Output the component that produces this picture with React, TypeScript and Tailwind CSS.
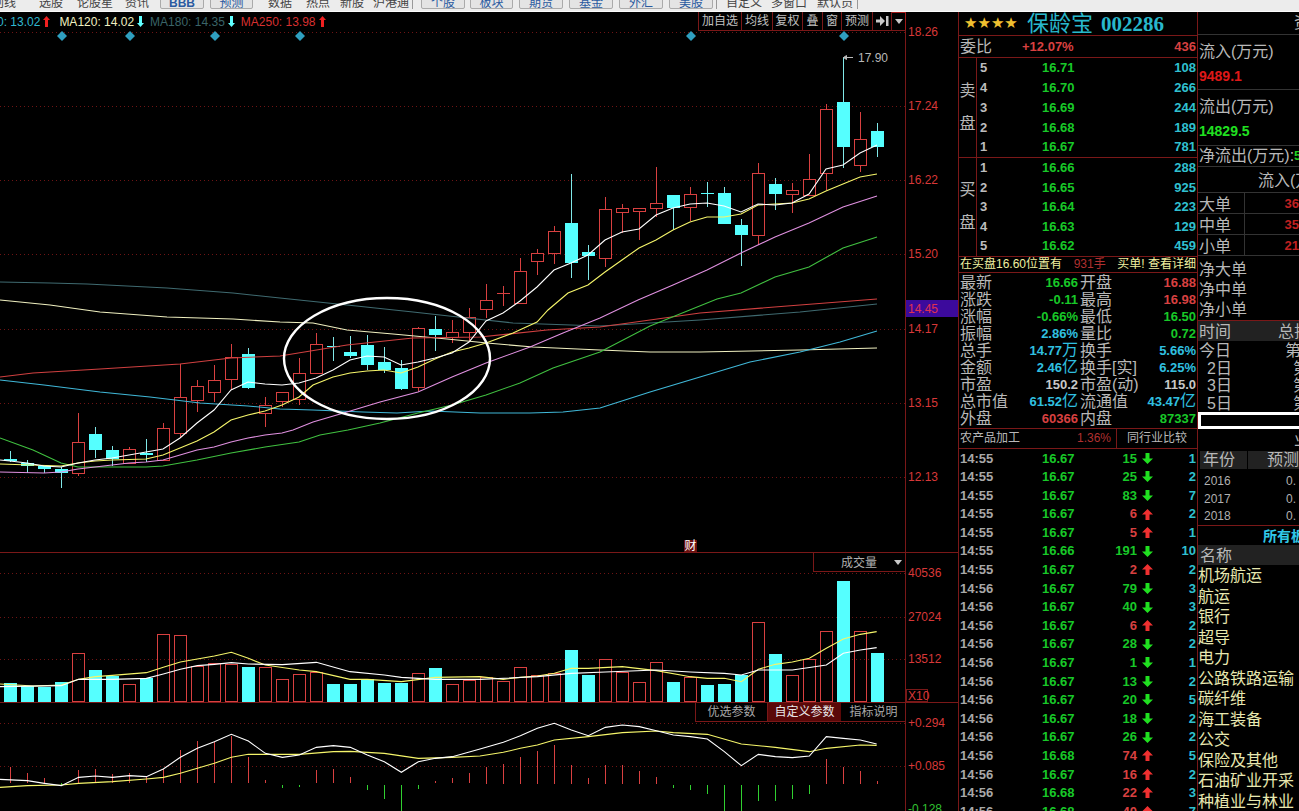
import React from "react";

type Candle = [number, number, number, number, "r" | "c"];

const X = (i: number) => 10 + 17 * i;

const candles: Candle[] = [
  [459, 461, 451, 462, "c"], [463, 466, 460, 473, "c"], [466, 469, 466, 473, "c"], [469, 473, 467, 488, "c"],
  [442, 473, 413, 476, "r"], [434, 450, 427, 458, "c"], [450, 459, 446, 466, "c"], [449, 463, 447, 463, "r"],
  [453, 455, 439, 462, "c"], [428, 460, 423, 460, "r"], [397, 433, 364, 438, "r"], [386, 400, 380, 412, "r"],
  [380, 392, 365, 402, "r"], [357, 379, 344, 390, "r"], [354, 388, 348, 389, "c"], [405, 413, 397, 427, "r"],
  [392, 401, 392, 407, "r"], [373, 399, 358, 405, "r"], [344, 373, 333, 373, "r"], [346, 346, 337, 361, "c"],
  [352, 356, 336, 358, "c"], [345, 365, 335, 370, "c"], [362, 370, 347, 373, "c"], [368, 389, 360, 390, "c"],
  [328, 387, 327, 391, "r"], [329, 335, 316, 351, "c"], [332, 337, 320, 343, "r"], [317, 332, 308, 342, "r"],
  [300, 309, 284, 318, "r"], [293, 293, 286, 306, "r"], [271, 303, 258, 303, "r"], [253, 261, 249, 275, "r"],
  [231, 253, 226, 264, "r"], [223, 263, 174, 278, "c"], [252, 256, 245, 280, "c"], [209, 258, 197, 267, "r"],
  [208, 212, 204, 233, "r"], [208, 211, 208, 240, "r"], [203, 208, 167, 217, "r"], [195, 208, 195, 230, "c"],
  [194, 207, 187, 221, "r"], [193, 193, 182, 207, "c"], [193, 224, 187, 224, "c"], [225, 235, 219, 266, "c"],
  [173, 235, 163, 245, "r"], [184, 194, 178, 210, "c"], [190, 194, 183, 213, "r"], [179, 195, 154, 195, "r"],
  [109, 173, 104, 190, "r"], [102, 147, 57, 168, "c"], [139, 165, 112, 172, "r"], [131, 147, 123, 157, "c"],
];

const maLines: { color: string; pts: number[][] }[] = [
  { color: "#3f6a70", pts: [[0, 282], [50, 283], [87, 284], [167, 288], [233, 293], [280, 298], [347, 305], [413, 312], [467, 318], [513, 323], [600, 326], [700, 320], [800, 312], [877, 304]] },
  { color: "#f0f0c0", pts: [[0, 300], [50, 305], [100, 312], [167, 317], [233, 319], [280, 322], [313, 323], [347, 330], [393, 334], [447, 339], [487, 343], [533, 347], [600, 350], [650, 352], [700, 352], [800, 350], [877, 348]] },
  { color: "#d04040", pts: [[0, 377], [33, 373], [100, 369], [180, 364], [231, 358], [280, 356], [347, 345], [413, 338], [480, 337], [547, 330], [600, 327], [700, 313], [800, 305], [877, 299]] },
  { color: "#40b8d8", pts: [[0, 380], [44, 385], [100, 392], [150, 397], [200, 403], [248, 406], [280, 409], [313, 410], [363, 412], [397, 413], [430, 411], [480, 413], [530, 413], [563, 412], [600, 408], [650, 392], [700, 377], [750, 362], [800, 352], [840, 342], [877, 331]] },
  { color: "#40c040", pts: [[0, 438], [33, 450], [61, 463], [78, 467], [112, 467], [146, 467], [163, 466], [197, 460], [231, 453], [265, 447], [299, 442], [320, 435], [348, 430], [380, 423], [418, 413], [452, 405], [486, 395], [520, 383], [553, 368], [600, 352], [650, 326], [717, 299], [741, 293], [775, 277], [809, 267], [843, 248], [877, 237]] },
  { color: "#e090e0", pts: [[0, 472], [44, 473], [61, 472], [78, 469], [95, 467], [112, 465], [129, 463], [146, 462], [163, 460], [180, 455], [197, 450], [214, 447], [231, 442], [248, 438], [265, 435], [282, 433], [293, 430], [313, 422], [347, 412], [380, 402], [418, 392], [452, 377], [486, 363], [530, 347], [563, 333], [600, 318], [638, 300], [673, 285], [707, 270], [741, 253], [775, 237], [809, 223], [843, 207], [877, 196]] },
  { color: "#f5f56a", pts: [[0, 464], [61, 466], [78, 463], [95, 461], [112, 460], [146, 459], [163, 455], [180, 448], [197, 441], [214, 432], [231, 420], [248, 415], [265, 411], [282, 405], [299, 397], [313, 385], [333, 377], [350, 373], [367, 371], [384, 370], [401, 373], [418, 367], [435, 359], [452, 352], [469, 348], [486, 343], [513, 333], [537, 322], [548, 310], [568, 293], [588, 285], [605, 272], [622, 260], [639, 248], [656, 240], [673, 230], [690, 222], [707, 217], [724, 217], [741, 214], [758, 205], [775, 204], [792, 203], [809, 199], [826, 191], [843, 184], [860, 177], [877, 174]] },
  { color: "#ffffff", pts: [[0, 460], [10, 461], [27, 463], [44, 466], [61, 467], [78, 463], [95, 460], [112, 458], [129, 455], [146, 452], [163, 449], [180, 438], [197, 423], [214, 410], [231, 390], [248, 382], [265, 384], [282, 385], [299, 383], [316, 378], [333, 370], [350, 360], [367, 356], [384, 357], [401, 365], [418, 362], [435, 358], [452, 353], [469, 342], [486, 321], [503, 313], [520, 301], [537, 287], [554, 270], [571, 263], [588, 255], [605, 240], [622, 232], [639, 229], [656, 215], [673, 208], [690, 204], [707, 203], [724, 206], [741, 212], [758, 204], [775, 205], [792, 203], [809, 194], [826, 169], [843, 165], [860, 153], [877, 145]] },
];

const volTops = [
  683, 686, 687, 682, 653, 670, 676, 684, 678, 634, 635, 666, 663, 664, 667, 667, 679, 674, 672, 684, 684, 679, 683, 683, 673, 668,
  684, 680, 677, 681, 667, 675, 673, 650, 675, 659, 672, 682, 662, 682, 677, 685, 684, 675, 622, 654, 675, 659, 631, 581, 631, 653,
];

const macdLeft = [592, 610, 625, 640, 600, 597, 613, 610, 620, 597, 541, 514, 517, 497, 560, 630, 653, 650, 600, 598, 622, 660, 687, 723, 656, 632, 625, 610];
const macdRight = [680, 672, 650, 633, 616, 675, 714, 675, 676, 693, 712, 745, 750, 762, 812, 812, 782, 782, 777, 762, 657, 680, 692, 724];

// traced from the crops, 3x coords with an offset
const fromCrop = (ox: number, oy: number, pts: number[][]) => pts.map(([x, y]) => [ox + x / 3, oy + y / 3]);

const volYellow = [
  ...fromCrop(0, 570, [[0, 342], [100, 348], [184, 345], [236, 328], [286, 320], [337, 316], [439, 308], [490, 292], [541, 276], [643, 258], [694, 247], [745, 265], [796, 285], [898, 300], [949, 305], [1050, 328], [1102, 328], [1204, 335], [1306, 322], [1440, 320]]),
  ...fromCrop(480, 540, [[70, 418], [121, 412], [172, 408], [223, 400], [274, 385], [325, 385], [427, 380], [529, 392], [631, 410], [682, 415], [733, 415], [784, 425], [835, 388], [886, 373], [937, 366], [988, 355], [1039, 325], [1090, 297], [1141, 283], [1190, 275]]),
];
const volWhite = [
  ...fromCrop(0, 570, [[0, 350], [184, 347], [236, 328], [337, 328], [439, 325], [490, 312], [541, 298], [592, 287], [643, 283], [694, 278], [745, 282], [847, 284], [949, 277], [1050, 305], [1153, 315], [1204, 322], [1306, 328], [1440, 328]]),
  ...fromCrop(480, 540, [[172, 410], [274, 400], [376, 396], [529, 390], [631, 396], [733, 400], [784, 405], [835, 390], [937, 390], [1039, 375], [1090, 340], [1141, 330], [1190, 323]]),
];
const macdWhite = [
  ...fromCrop(0, 570, [[0, 628], [82, 632], [133, 640], [184, 647], [236, 622], [286, 618], [337, 622], [388, 617], [439, 620], [490, 597], [541, 562], [592, 535], [643, 515], [694, 493], [745, 513], [796, 550], [847, 562], [898, 555], [949, 532], [1000, 527], [1051, 532], [1102, 555], [1153, 575], [1204, 607], [1255, 575], [1306, 565], [1357, 560], [1440, 537]]),
  ...fromCrop(480, 540, [[70, 607], [121, 587], [172, 565], [223, 550], [274, 570], [325, 587], [376, 562], [427, 555], [478, 560], [529, 572], [580, 585], [631, 590], [682, 597], [733, 635], [784, 677], [835, 643], [886, 650], [937, 653], [988, 648], [1039, 590], [1090, 595], [1141, 600], [1190, 612]]),
];
const macdYellow = [
  ...fromCrop(0, 570, [[0, 652], [82, 647], [184, 645], [236, 640], [337, 635], [439, 627], [490, 622], [541, 610], [592, 595], [643, 580], [694, 562], [745, 553], [898, 553], [1000, 545], [1051, 544], [1153, 550], [1255, 565], [1357, 562], [1440, 558]]),
  ...fromCrop(480, 540, [[70, 637], [121, 625], [172, 615], [223, 600], [325, 590], [427, 578], [529, 573], [580, 578], [682, 583], [784, 612], [886, 622], [988, 635], [1039, 625], [1141, 615], [1190, 616]]),
];

const asPoints = (pts: number[][]) => pts.map((p) => p.join(",")).join(" ");

const RED = "#d84040";
const CYAN = "#55ffff";
const GRID = "#6e1414";
const LINE = "#7a1818";
const LABEL = "#d83838";

function GridLine({ y }: { y: number }) {
  return <line x1={0} x2={905} y1={y + 0.5} y2={y + 0.5} stroke={GRID} strokeDasharray="1 3" />;
}

function AxisText({ y, children, color = LABEL }: { y: number; children: React.ReactNode; color?: string }) {
  return (
    <text x={908} y={y + 4} fill={color} fontSize={12}>
      {children}
    </text>
  );
}

function Diamond({ x }: { x: number }) {
  return <path d={`M${x} 31 L${x + 5} 36 L${x} 41 L${x - 5} 36 Z`} fill="#2f9fc0" />;
}

function PriceChart() {
  return (
    <svg viewBox="0 12 958 541" className="block h-[541px] w-[958px]">
      {[32, 106, 180, 254, 329, 403, 477].map((y) => (
        <GridLine key={y} y={y} />
      ))}
      <line x1={905.5} x2={905.5} y1={12} y2={553} stroke={LINE} />
      {[62, 130, 215, 300, 691, 844].map((x) => (
        <Diamond key={x} x={x} />
      ))}
      <AxisText y={32}>18.26</AxisText>
      <AxisText y={106}>17.24</AxisText>
      <AxisText y={180}>16.22</AxisText>
      <AxisText y={254}>15.20</AxisText>
      <AxisText y={329}>14.17</AxisText>
      <AxisText y={403}>13.15</AxisText>
      <AxisText y={477}>12.13</AxisText>
      <rect x={906} y={300} width={52} height={17} fill="#3c0a9c" />
      <text x={908} y={313} fill="#e03050" fontSize={12}>
        14.45
      </text>

      {candles.map(([top, bottom, high, low, kind], i) => {
        const x = X(i);
        const color = kind === "r" ? RED : CYAN;
        const cross = bottom - top < 1;
        return (
          <g key={i} shapeRendering="crispEdges">
            <line x1={x + 0.5} x2={x + 0.5} y1={high} y2={low} stroke={kind === "r" ? RED : "#80e8e8"} />
            {cross ? (
              <line x1={x - 6} x2={x + 7} y1={top + 0.5} y2={top + 0.5} stroke={color} />
            ) : kind === "r" ? (
              <rect x={x - 5.5} y={top + 0.5} width={12} height={bottom - top} fill="#000" stroke={RED} strokeWidth={1.4} />
            ) : (
              <rect x={x - 6} y={top} width={13} height={bottom - top} fill={CYAN} />
            )}
          </g>
        );
      })}

      {maLines.map((l) => (
        <polyline key={l.color} points={asPoints(l.pts)} fill="none" stroke={l.color} strokeWidth={1.1} />
      ))}

      <ellipse cx={387} cy={358.5} rx={103} ry={60.5} fill="none" stroke="#fff" strokeWidth={2.4} />

      <path d="M843.5 57.5 H853 M843.5 57.5 l3 -2 v4 z" stroke="#bbb" fill="#bbb" />
      <text x={858} y={62} fill="#b8b8b8" fontSize={12}>
        17.90
      </text>
    </svg>
  );
}

function VolumeChart() {
  return (
    <svg viewBox="0 553 958 150" className="block h-[150px] w-[958px]">
      {[573, 617, 659].map((y) => (
        <GridLine key={y} y={y} />
      ))}
      <line x1={0} x2={958} y1={702.5} y2={702.5} stroke={LINE} />
      <line x1={905.5} x2={905.5} y1={553} y2={703} stroke={LINE} />
      <AxisText y={573}>40536</AxisText>
      <AxisText y={617}>27024</AxisText>
      <AxisText y={659}>13512</AxisText>
      <rect x={906.5} y={689.5} width={21} height={12} fill="none" stroke="#7a1818" />
      <text x={908} y={700} fill={LABEL} fontSize={12}>
        X10
      </text>
      {volTops.map((top, i) => {
        const x = X(i);
        return candles[i][4] === "r" ? (
          <rect key={i} x={x - 5.5} y={top + 0.5} width={12} height={701 - top} fill="none" stroke={RED} strokeWidth={1.4} shapeRendering="crispEdges" />
        ) : (
          <rect key={i} x={x - 6} y={top} width={13} height={702 - top} fill={CYAN} shapeRendering="crispEdges" />
        );
      })}
      <polyline points={asPoints(volYellow)} fill="none" stroke="#f5f56a" strokeWidth={1.1} />
      <polyline points={asPoints(volWhite)} fill="none" stroke="#fff" strokeWidth={1.1} />
    </svg>
  );
}

function MacdChart() {
  const bars = [
    ...macdLeft.map((z, i) => ({ i, red: z < 640, y1: 570 + (z < 640 ? z : 645) / 3, y2: 570 + (z < 640 ? 640 : z) / 3 })),
    ...macdRight.map((z, i) => ({ i: i + 28, red: z < 732, y1: 540 + (z < 732 ? z : 735) / 3, y2: 540 + (z < 732 ? 732 : z) / 3 })),
  ];
  return (
    <svg viewBox="0 703 958 108" className="block h-[108px] w-[958px]">
      <GridLine y={723} />
      <GridLine y={766} />
      <line x1={905.5} x2={905.5} y1={703} y2={811} stroke={LINE} />
      <AxisText y={723}>+0.294</AxisText>
      <AxisText y={766}>+0.085</AxisText>
      <AxisText y={809} color="#30c030">
        -0.128
      </AxisText>
      {bars.map((b) => (
        <line
          key={b.i}
          x1={X(b.i) + 0.5}
          x2={X(b.i) + 0.5}
          y1={b.y1}
          y2={b.y2}
          stroke={b.red ? RED : "#30d030"}
          shapeRendering="crispEdges"
        />
      ))}
      <polyline points={asPoints(macdYellow)} fill="none" stroke="#f5f56a" strokeWidth={1.1} />
      <polyline points={asPoints(macdWhite)} fill="none" stroke="#fff" strokeWidth={1.1} />
    </svg>
  );
}

function MaArrow({ up, gap }: { up: boolean; gap: string }) {
  return (
    <svg width="7" height="11" viewBox="0 0 7 11" className={`ml-[3px] ${gap}`}>
      {up ? (
        <path d="M3.5 0 L7 4 H5 V11 H2 V4 H0 Z" fill="#f02020" />
      ) : (
        <path d="M3.5 11 L7 7 H5 V0 H2 V7 H0 Z" fill="#60ffff" />
      )}
    </svg>
  );
}

function Legend() {
  return (
    <div className="absolute left-[-3px] top-0 flex h-[19px] items-center whitespace-nowrap text-[12px]">
      <span className="text-[#30b8d0]">0: 13.02</span>
      <MaArrow up gap="mr-[9px]" />
      <span className="text-[#f0f0c0]">MA120: 14.02</span>
      <MaArrow up={false} gap="mr-[6px]" />
      <span className="text-[#3a6468]">MA180: 14.35</span>
      <MaArrow up={false} gap="mr-[6px]" />
      <span className="text-[#d83030]">MA250: 13.98</span>
      <MaArrow up gap="mr-[6px]" />
    </div>
  );
}

function ChartTools() {
  const tools = [
    { t: "加自选", w: "w-[43px]" },
    { t: "均线", w: "w-[31px]" },
    { t: "复权", w: "w-[30px]" },
    { t: "叠", w: "w-[20px]" },
    { t: "窗", w: "w-[19px]" },
    { t: "预测", w: "w-[31px]" },
  ];
  return (
    <div className="absolute left-[698px] top-0 flex h-[19px] w-[208px] border-b border-l border-[#7a1818] text-[12px] text-[#c0c0c0]">
      {tools.map((b) => (
        <div key={b.t} className={`flex items-center justify-center border-r border-[#7a1818] ${b.w}`}>
          {b.t}
        </div>
      ))}
      <div className="flex w-[19px] items-center justify-center border-r border-[#7a1818]">
        <svg width="13" height="10" viewBox="0 0 13 10">
          <path d="M0 3.5 H4 V0 L9 5 L4 10 V6.5 H0 Z M10 0 H12.5 V10 H10 Z" fill="#c8c8c8" />
        </svg>
      </div>
      <div className="flex flex-1 items-center justify-center border-t border-r border-[#a01818]">
        <svg width="8" height="5" viewBox="0 0 8 5">
          <path d="M0 0 H8 L4 5 Z" fill="#c8c8c8" />
        </svg>
      </div>
    </div>
  );
}

function ChartColumn() {
  return (
    <div className="flex w-[958px] flex-col">
      <div className="relative h-[541px] border-b border-[#7a1818]">
        <PriceChart />
        <Legend />
        <ChartTools />
        <div className="absolute left-[684px] top-[528px] flex h-[12px] w-[13px] items-center justify-center bg-[#6a1010] text-[12px] leading-[12px] text-white">
          财
        </div>
      </div>
      <div className="relative h-[150px]">
        <VolumeChart />
        <div className="absolute left-[813px] top-0 flex h-[19px] w-[93px] items-center justify-between border-b border-l border-[#7a1818] pl-[27px] pr-[4px] pt-[1px] text-[12px] text-[#b0b0b0]">
          成交量
          <svg width="8" height="5" viewBox="0 0 8 5">
            <path d="M0 0 H8 L4 5 Z" fill="#c8c8c8" />
          </svg>
        </div>
      </div>
      <div className="relative h-[108px] overflow-hidden">
        <MacdChart />
        <div className="absolute left-[695px] top-0 flex h-[19px] w-[211px] border-b border-l border-[#7a1818] text-[12px] text-[#a8a8a8]">
          <div className="flex w-[72px] items-center justify-center border-r border-[#7a1818]">优选参数</div>
          <div className="flex w-[73px] items-center justify-center bg-[#5a0808] text-[#e8e8e8]">自定义参数</div>
          <div className="flex flex-1 items-center justify-center">指标说明</div>
        </div>
      </div>
    </div>
  );
}

const bookSell = [
  ["5", "16.71", "108"],
  ["4", "16.70", "266"],
  ["3", "16.69", "244"],
  ["2", "16.68", "189"],
  ["1", "16.67", "781"],
];
const bookBuy = [
  ["1", "16.66", "288"],
  ["2", "16.65", "925"],
  ["3", "16.64", "223"],
  ["4", "16.63", "129"],
  ["5", "16.62", "459"],
];

function BookBlock({ label, rows, rowH }: { label: string[]; rows: string[][]; rowH: string }) {
  return (
    <div className="flex border-b border-[#7a1818]">
      <div className="flex w-[18px] flex-col items-center justify-center gap-[17px] border-r border-[#7a1818] text-[16px] leading-[16px] text-[#b8b8b8]">
        <span>{label[0]}</span>
        <span>{label[1]}</span>
      </div>
      <div className="flex-1">
        {rows.map(([n, price, qty]) => (
          <div key={n} className={`flex items-center font-bold text-[13px] ${rowH}`}>
            <span className="w-[65px] pl-[3px] text-[#bdbdbd]">{n}</span>
            <span className="w-[50px] text-[#18c828]">{price}</span>
            <span className="flex-1 pr-[1px] text-right text-[#30c0d0]">{qty}</span>
          </div>
        ))}
      </div>
    </div>
  );
}

const G = "text-[#18c828]";
const R = "text-[#d84040]";
const C = "text-[#30c0e0]";
const W = "text-[#c8c8c8]";

const stats: [string, string, string, string, string, string, string, string][] = [
  ["最新", "16.66", "", G, "开盘", "16.88", "", R],
  ["涨跌", "-0.11", "", G, "最高", "16.98", "", R],
  ["涨幅", "-0.66%", "", G, "最低", "16.50", "", G],
  ["振幅", "2.86%", "", C, "量比", "0.72", "", G],
  ["总手", "14.77", "万", C, "换手", "5.66%", "", C],
  ["金额", "2.46", "亿", C, "换手[实]", "6.25%", "", C],
  ["市盈", "150.2", "", W, "市盈(动)", "115.0", "", W],
  ["总市值", "61.52", "亿", C, "流通值", "43.47", "亿", C],
  ["外盘", "60366", "", R, "内盘", "87337", "", G],
];

function Stats() {
  return (
    <div className="border-b border-[#7a1818] pb-[1px] pt-[1px] text-[16px] text-[#b8b8b8]">
      {stats.map(([l1, v1, u1, c1, l2, v2, u2, c2]) => (
        <div key={l1} className="flex h-[17px] items-center leading-[17px]">
          <div className="flex w-[119px] items-center justify-between pl-[1px]">
            <span>{l1}</span>
            <span className={`font-bold text-[13px] ${c1}`}>
              {v1}
              {u1 && <span className="font-normal text-[16px]">{u1}</span>}
            </span>
          </div>
          <div className="flex flex-1 items-center justify-between pl-[2px] pr-[1px]">
            <span className="whitespace-nowrap">{l2}</span>
            <span className={`font-bold text-[13px] ${c2}`}>
              {v2}
              {u2 && <span className="font-normal text-[16px]">{u2}</span>}
            </span>
          </div>
        </div>
      ))}
    </div>
  );
}

const ticks: [string, string, string, boolean, string][] = [
  ["14:55", "16.67", "15", false, "1"],
  ["14:55", "16.67", "25", false, "2"],
  ["14:55", "16.67", "83", false, "7"],
  ["14:55", "16.67", "6", true, "2"],
  ["14:55", "16.67", "5", true, "1"],
  ["14:55", "16.66", "191", false, "10"],
  ["14:55", "16.67", "2", true, "2"],
  ["14:56", "16.67", "79", false, "3"],
  ["14:56", "16.67", "40", false, "3"],
  ["14:56", "16.67", "6", true, "2"],
  ["14:56", "16.67", "28", false, "2"],
  ["14:56", "16.67", "1", false, "1"],
  ["14:56", "16.67", "13", false, "2"],
  ["14:56", "16.67", "20", false, "5"],
  ["14:56", "16.67", "18", false, "2"],
  ["14:56", "16.67", "26", false, "2"],
  ["14:56", "16.68", "74", true, "5"],
  ["14:56", "16.67", "16", true, "2"],
  ["14:56", "16.68", "22", true, "3"],
  ["14:56", "16.68", "40", true, "7"],
];

function TickArrow({ up }: { up: boolean }) {
  return (
    <svg width="11" height="11" viewBox="0 0 11 11">
      {up ? (
        <path d="M5.5 0 L11 5.5 H7.5 V11 H3.5 V5.5 H0 Z" fill="#f03030" />
      ) : (
        <path d="M5.5 11 L11 5.5 H7.5 V0 H3.5 V5.5 H0 Z" fill="#20e020" />
      )}
    </svg>
  );
}

function TickList() {
  return (
    <div className="min-h-0 flex-1 overflow-hidden">
      {ticks.map(([time, price, qty, up, count], i) => (
        <div key={i} className="flex h-[18.6px] items-center font-bold text-[13px]">
          <span className="w-[83px] pl-[1px] text-[#a8a8a8]">{time}</span>
          <span className="w-[36px] text-[#18c828]">{price}</span>
          <span className={`w-[59px] text-right ${up ? R : G}`}>{qty}</span>
          <span className="flex w-[19px] justify-center pl-[1px]">
            <TickArrow up={up} />
          </span>
          <span className="flex-1 pr-[1px] text-right text-[#30c0d0]">{count}</span>
        </div>
      ))}
    </div>
  );
}

function QuotePanel() {
  return (
    <div className="flex w-[240px] flex-col border-x border-[#7a1818]">
      <div className="flex h-[24px] items-center border-b border-[#7a1818] pl-[5px]">
        <span className="w-[63px] font-['DejaVu_Sans'] text-[15px] leading-[15px] text-[#f0c030]">★★★★</span>
        <span className="text-[22px] leading-[22px] text-[#28b8cc]">保龄宝</span>
        <span className="ml-[8px] font-['Liberation_Serif'] text-[21px] font-bold leading-[22px] text-[#28b8cc]">002286</span>
      </div>
      <div className="flex h-[22px] items-center border-b border-[#7a1818] font-bold text-[13px]">
        <span className="w-[63px] pl-[1px] text-[16px] font-normal text-[#b8b8b8]">委比</span>
        <span className={`w-[60px] ${R}`}>+12.07%</span>
        <span className={`flex-1 pr-[1px] text-right ${R}`}>436</span>
      </div>
      <BookBlock label={["卖", "盘"]} rows={bookSell} rowH="h-[19.8px]" />
      <BookBlock label={["买", "盘"]} rows={bookBuy} rowH="h-[19.6px]" />
      <div className="flex h-[16px] items-center justify-between whitespace-nowrap border-b border-[#7a1818] px-[1px] text-[12px] text-[#f0f0a0]">
        <span>在买盘16.60位置有</span>
        <span className="text-[#b03030]">931手</span>
        <span>买单! 查看详细</span>
      </div>
      <Stats />
      <div className="flex h-[20px] border-b border-[#7a1818] text-[12px]">
        <div className="flex w-[158px] items-center justify-between border-r border-[#7a1818] pl-[1px] pr-[5px] text-[#b8b8b8]">
          农产品加工
          <span className="text-[#b03030]">1.36%</span>
        </div>
        <div className="flex flex-1 items-center justify-center text-[#b8b8b8]">同行业比较</div>
      </div>
      <TickList />
    </div>
  );
}

const sectors = ["机场航运", "航运", "银行", "超导", "电力", "公路铁路运输", "碳纤维", "海工装备", "公交", "保险及其他", "石油矿业开采", "种植业与林业"];

function CapitalRow({ label, value }: { label: string; value: string }) {
  return (
    <div className="flex h-[21px] shrink-0 border-b border-[#333]">
      <div className="flex w-[49px] items-center border-r border-[#333] pl-[1px] pt-[3px]">{label}</div>
      <div className="flex flex-1 items-center pl-[40px] pt-[2px] font-bold text-[13px] text-[#c02020]">{value}</div>
    </div>
  );
}

function FlowPanel() {
  return (
    <div className="flex w-[101px] flex-col overflow-hidden whitespace-nowrap text-[16px] leading-[18px] text-[#b8b8b8]">
      <div className="flex h-[23px] shrink-0 items-center border-b border-[#333] pl-[96px]">资</div>
      <div className="flex h-[55px] shrink-0 flex-col border-b border-[#333] pl-[1px] pt-[8px]">
        <span>流入(万元)</span>
        <span className="mt-[6px] font-bold text-[14px] text-[#e01818]">9489.1</span>
      </div>
      <div className="flex h-[56px] shrink-0 flex-col border-b border-[#333] pl-[1px] pt-[8px]">
        <span>流出(万元)</span>
        <span className="mt-[6px] font-bold text-[14px] text-[#20e020]">14829.5</span>
      </div>
      <div className="flex h-[21px] shrink-0 items-center border-b border-[#333] pl-[1px]">
        净流出(万元):<span className="font-bold text-[13px] text-[#20d020]">5</span>
      </div>
      <div className="flex h-[26px] shrink-0 items-center border-b border-[#333] pl-[60px] pt-[2px]">流入(万元)</div>
      <CapitalRow label="大单" value="36" />
      <CapitalRow label="中单" value="35" />
      <CapitalRow label="小单" value="21" />
      <div className="flex h-[65px] shrink-0 flex-col border-b border-[#7a1818] pl-[1px] pt-[4px]">
        <span className="flex h-[20px] items-center">净大单</span>
        <span className="flex h-[20px] items-center">净中单</span>
        <span className="flex h-[20px] items-center">净小单</span>
      </div>
      <div className="flex h-[20px] shrink-0 items-center justify-between bg-[#222] pl-[1px] pt-[1px]">
        时间
        <span className="w-[21px]">总排</span>
      </div>
      {["今日", "2日", "3日", "5日"].map((d, i) => (
        <div key={d} className={`flex h-[17.75px] shrink-0 items-center pt-[2px] ${i === 0 ? "pl-[1px]" : "pl-[9px]"}`}>
          <span className="w-[86px] shrink-0">{d}</span>
          第
        </div>
      ))}
      <div className="h-[17px] shrink-0 border-[3px] border-r-0 border-white" />
      <div className="flex h-[21px] shrink-0 items-center pl-[96px]">业</div>
      <div className="flex h-[19px] shrink-0 gap-[1px] pl-[2px] pt-[1px]">
        <div className="flex w-[55px] items-center bg-[#222] pl-[3px]">年份</div>
        <div className="flex flex-1 items-center bg-[#222] pl-[19px]">预测</div>
      </div>
      <div className="flex h-[57px] shrink-0 flex-col border-b border-[#7a1818] pt-[3px] text-[12px] text-[#b0b0b0]">
        {["2016", "2017", "2018"].map((y) => (
          <div key={y} className="flex h-[17.7px] items-center pl-[6px]">
            <span className="w-[82px]">{y}</span>
            0.
          </div>
        ))}
      </div>
      <div className="flex h-[19px] shrink-0 items-center pl-[65px] text-[14px] font-bold text-[#30c8e8]">所有板</div>
      <div className="flex h-[20px] shrink-0 items-center bg-[#222] pl-[2px] pt-[1px]">名称</div>
      {sectors.map((s) => (
        <div key={s} className="flex h-[20.5px] shrink-0 items-center pt-[2px] text-[#e8e8b0]">
          {s}
        </div>
      ))}
    </div>
  );
}

const navItems = [
  { t: "划线", ml: "ml-[-8px]", w: "w-[24px]" },
  { t: "选股", ml: "ml-[23px]", w: "w-[24px]" },
  { t: "论股星", ml: "ml-[14px]", w: "w-[36px]" },
  { t: "资讯", ml: "ml-[12px]", w: "w-[24px]" },
  { t: "BBB", ml: "ml-[11px]", w: "w-[44px]", btn: true, bold: true },
  { t: "预测", ml: "ml-[6px]", w: "w-[43px]", btn: true },
  { t: "数据", ml: "ml-[15px]", w: "w-[24px]" },
  { t: "热点", ml: "ml-[14px]", w: "w-[24px]" },
  { t: "新股", ml: "ml-[10px]", w: "w-[24px]" },
  { t: "沪港通", ml: "ml-[9px]", w: "w-[36px]", sep: true },
  { t: "个股", ml: "ml-[4px]", w: "w-[44px]", btn: true },
  { t: "板块", ml: "ml-[5px]", w: "w-[43px]", btn: true },
  { t: "期货", ml: "ml-[6px]", w: "w-[44px]", btn: true },
  { t: "基金", ml: "ml-[6px]", w: "w-[44px]", btn: true },
  { t: "外汇", ml: "ml-[6px]", w: "w-[44px]", btn: true },
  { t: "美股", ml: "ml-[6px]", w: "w-[44px]", btn: true, sep: true },
  { t: "自定义", ml: "ml-[5px]", w: "w-[36px]" },
  { t: "多窗口", ml: "ml-[9px]", w: "w-[36px]" },
  { t: "默认员", ml: "ml-[10px]", w: "w-[36px]" },
];

function TopBar() {
  return (
    <div className="h-[12px] overflow-hidden border-b border-[#fafafa] bg-[#ececec]">
      <div className="mt-[-3px] flex h-[12px] items-stretch whitespace-nowrap text-[12px] leading-[12px] text-[#444]">
        {navItems.map((n) => (
          <React.Fragment key={n.t}>
            <div
              className={`flex items-center justify-center ${n.ml} ${n.w} ${
                n.btn ? "rounded-[2px] border border-[#aaa] bg-[#e4e4e4] text-[#2a5aa0]" : ""
              } ${n.bold ? "font-bold" : ""}`}
            >
              {n.t}
            </div>
            {n.sep && <div className="ml-[3px] mr-[4px] w-[1px] bg-[#999]" />}
          </React.Fragment>
        ))}
        <div className="ml-[4px] border-l border-[#999]" />
      </div>
    </div>
  );
}

export default function App() {
  return (
    <div className="flex h-[811px] w-[1299px] flex-col overflow-hidden bg-black font-['Liberation_Sans','Noto_Sans_CJK_SC',sans-serif]">
      <TopBar />
      <div className="flex min-h-0 flex-1">
        <ChartColumn />
        <QuotePanel />
        <FlowPanel />
      </div>
    </div>
  );
}
